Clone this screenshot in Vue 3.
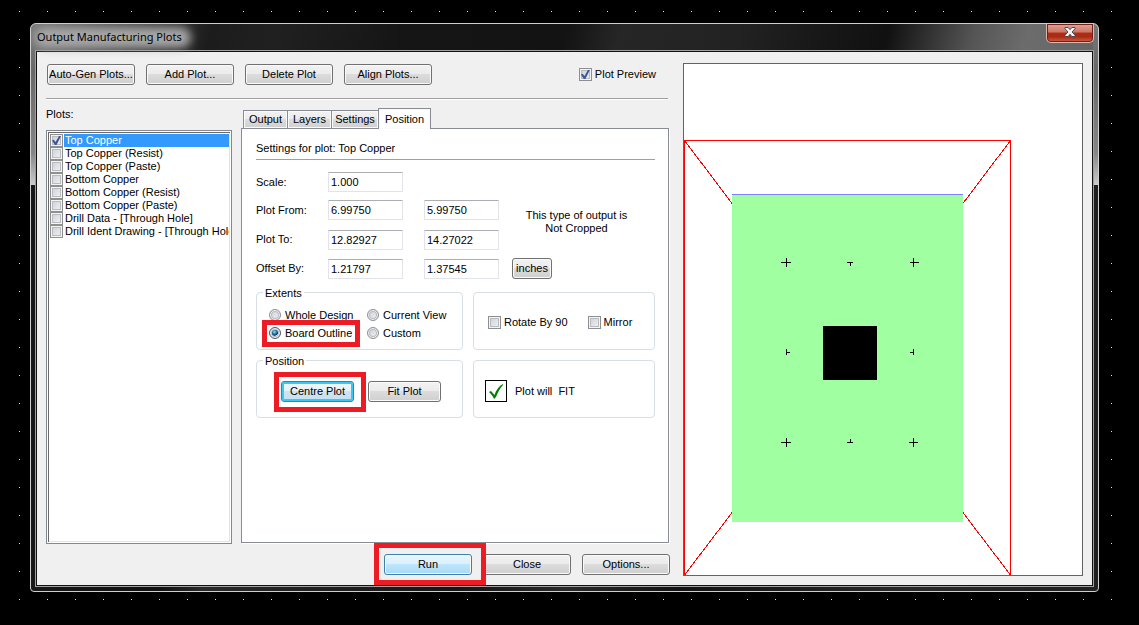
<script setup>
import { ref } from 'vue'

const plots = ref([
  { name: 'Top Copper', on: true },
  { name: 'Top Copper (Resist)', on: false },
  { name: 'Top Copper (Paste)', on: false },
  { name: 'Bottom Copper', on: false },
  { name: 'Bottom Copper (Resist)', on: false },
  { name: 'Bottom Copper (Paste)', on: false },
  { name: 'Drill Data - [Through Hole]', on: false },
  { name: 'Drill Ident Drawing - [Through Hole]', on: false }
])
const selected = ref(0)
const tabs = ['Output', 'Layers', 'Settings', 'Position']
const activeTab = ref('Position')
const preview = ref(true)
const scale = ref('1.000')
const rows = ref([
  { id: 'from', label: 'Plot From:', x: '6.99750', y: '5.99750' },
  { id: 'to', label: 'Plot To:', x: '12.82927', y: '14.27022' },
  { id: 'offset', label: 'Offset By:', x: '1.21797', y: '1.37545' }
])
const extents = ['Whole Design', 'Current View', 'Board Outline', 'Custom']
const extent = ref('Board Outline')
const rotate = ref(false)
const mirror = ref(false)
</script>

<template>
  <main class="desktop">
    <section class="window" aria-label="Output Manufacturing Plots">
      <header class="titlebar">
        <h1>Output Manufacturing Plots</h1>
        <button class="close" type="button" aria-label="Close window">
          <svg width="12" height="10" viewBox="0 0 12 10">
            <path d="M1 .5h3.2L6 2.7 7.8.5H11v1.3L8 5l3 3.2v1.3H7.800L6 7.300 4.200 9.500H1V8.200L4 5 1 1.800z" fill="#f4f4f6" stroke="#484c5c" />
          </svg>
        </button>
      </header>

      <div class="client">
        <div class="left">
          <div class="toolbar">
            <button type="button" class="btn">Auto-Gen Plots...</button>
            <button type="button" class="btn">Add Plot...</button>
            <button type="button" class="btn">Delete Plot</button>
            <button type="button" class="btn">Align Plots...</button>
            <label class="check previewcheck"><input v-model="preview" type="checkbox" />Plot Preview</label>
          </div>

          <div class="middle">
            <div class="plots">
              <h2 id="plots-title">Plots:</h2>
              <ul class="list" aria-labelledby="plots-title">
                <li v-for="(p, i) in plots" :key="p.name" @click="selected = i">
                  <label><input v-model="p.on" type="checkbox" /><span :class="{ sel: selected === i }">{{ p.name }}</span></label>
                </li>
              </ul>
            </div>

            <div class="tabbed">
              <div class="tabs" role="tablist">
                <button
                  v-for="t in tabs" :key="t" type="button" role="tab" class="tab"
                  :class="{ active: t === activeTab }" :aria-selected="t === activeTab" @click="activeTab = t"
                >{{ t }}</button>
              </div>
              <div class="panel" role="tabpanel">
                <p class="heading">Settings for plot: Top Copper</p>
                <div class="form">
                  <div class="fields">
                    <div class="row">
                      <label for="scale">Scale:</label>
                      <input id="scale" v-model="scale" class="text" type="text" />
                    </div>
                    <div v-for="r in rows" :key="r.id" class="row">
                      <label :for="r.id + '-x'">{{ r.label }}</label>
                      <input :id="r.id + '-x'" v-model="r.x" class="text" type="text" />
                      <input v-model="r.y" class="text" type="text" :aria-label="r.label + ' Y'" />
                    </div>
                  </div>
                  <div class="side">
                    <p>This type of output is<br />Not Cropped</p>
                    <button type="button" class="btn units">inches</button>
                  </div>
                </div>

                <div class="groups">
                  <fieldset>
                    <legend>Extents</legend>
                    <div class="radios">
                      <label v-for="e in extents" :key="e" class="radio">
                        <input v-model="extent" type="radio" name="extent" :value="e" />{{ e }}
                        <span v-if="e === 'Board Outline'" class="mark mark-radio"></span>
                      </label>
                    </div>
                  </fieldset>
                  <fieldset class="flags">
                    <label class="check"><input v-model="rotate" type="checkbox" />Rotate By 90</label>
                    <label class="check"><input v-model="mirror" type="checkbox" />Mirror</label>
                  </fieldset>
                  <fieldset>
                    <legend>Position</legend>
                    <div class="position">
                      <span class="marked"><button type="button" class="btn focused">Centre Plot</button><span class="mark mark-centre"></span></span>
                      <button type="button" class="btn">Fit Plot</button>
                    </div>
                  </fieldset>
                  <fieldset class="fit">
                    <svg width="22" height="22" viewBox="0 0 22 22">
                      <rect x=".5" y=".5" width="21" height="21" fill="#fff" stroke="#000" />
                      <path d="M4 12l2-1 3.500 4C11 10 14 6 18 4v1c-3 3-5 7-7 12l-2 2c-1-3-3-5-5-7z" fill="#008000" />
                    </svg>
                    <span>Plot will &nbsp;FIT</span>
                  </fieldset>
                </div>
              </div>
            </div>
          </div>

          <footer class="actions">
            <span class="marked"><button type="button" class="btn run">Run</button><span class="mark mark-run"></span></span>
            <button type="button" class="btn">Close</button>
            <button type="button" class="btn">Options...</button>
          </footer>
        </div>

        <div class="preview">
          <svg viewBox="0 0 398 511" preserveAspectRatio="xMinYMin meet" shape-rendering="crispEdges" role="img" aria-label="Plot preview">
            <g fill="none" stroke="#f00">
              <path d="M.5 511V76.500H326.500V511" />
              <path d="M.5 76.500L48.500 140M326.500 76.500L278.500 140M.5 511L48.500 448M326.500 511L278.500 448" />
            </g>
            <rect x="48" y="131" width="231" height="327" fill="#a0ffa0" />
            <rect x="48" y="130" width="231" height="1" fill="#8080ff" />
            <rect x="139" y="262" width="54" height="54" />
            <path
              fill="none" stroke="#000"
              d="M97 198.500h10M102.500 194v9M226 198.500h9M229.500 194v9M163 198.500h6M166.500 198v4M102.500 285v6M102 288.500h4M229.500 285v6M226 288.500h4M97 378.500h10M102.500 374v9M225 378.500h9M229.500 374v9M163 378.500h6M166.500 375v4"
            />
          </svg>
        </div>
      </div>
    </section>
  </main>
</template>

<style>
body { background: #000; }
</style>

<style scoped>
* { box-sizing: border-box; }
.desktop {
  min-height: 100vh;
  padding: 23px 40px 33px 30px;
  display: flex;
  font: 11px/13px "Liberation Sans", Arial, sans-serif;
  color: #000;
  background:
    linear-gradient(#000, #000) 0 100% / 100% 24px no-repeat,
    conic-gradient(from 270deg at 1px 1px, #e8e8e8 90deg, #000 0) 19px 11px / 28px 28px;
}
h1, h2, p, ul { margin: 0; padding: 0; font: inherit; list-style: none; }
button, input { font: inherit; color: inherit; margin: 0; }
.window {
  flex: 1;
  display: flex;
  flex-direction: column;
  border: 1px solid #cfcfcf;
  border-radius: 6px 6px 4px 4px;
  padding: 0 5px 5px;
  overflow: hidden;
  background:
    linear-gradient(#777, #696969 30%, #858585 80%, #ccc) 0 0 / 5px 161px no-repeat,
    linear-gradient(#777, #696969 30%, #858585 80%, #ccc) 100% 0 / 5px 161px no-repeat,
    linear-gradient(105deg, #777 0, #464646 9%, #1c1c1c 17%, #202020 23%, #151515 35%, #131313 50%, #262626 55%, #222 66%, #171717 74%, #111 80%, #555 88%, #6c6c6c 93%, #656565) 0 0 / 100% 28px no-repeat,
    linear-gradient(90deg, #171717, #101010 12%, #292929 16%, #151515 40%, #292929 50%, #131313 61%, #292929 82%, #202020);
}
.titlebar { height: 27px; display: flex; justify-content: space-between; align-items: flex-start; }
h1 {
  position: relative;
  z-index: 0;
  padding: 4px 1px 5px;
  font: 11px/17px "Noto Sans", "Open Sans", sans-serif;
}
h1::before {
  content: "";
  position: absolute;
  z-index: -1;
  inset: 3px -8px 2px -2px;
  border-radius: 10px;
  background: #a8a8a8;
  filter: blur(5px);
}
.close {
  width: 48px;
  height: 19px;
  margin-right: -1px;
  padding: 0 0 2px;
  display: flex;
  align-items: center;
  justify-content: center;
  border: 1px solid #d8b8b0;
  border-top: 0;
  border-radius: 0 0 5px 5px;
  box-shadow: inset 0 0 0 1px #702018;
  background: linear-gradient(#e0a598, #cf7565 45%, #b02c14 50%, #a82b13 70%, #d06048);
}
.client {
  flex: 1;
  display: grid;
  grid-template-columns: minmax(0, 622fr) minmax(0, 400fr);
  gap: 15px;
  padding: 11px 9px 9px;
  background: #f0f0f0;
  border: 1px solid #111;
  outline: 1px solid #a0a0a0;
}
.left { display: flex; flex-direction: column; min-width: 0; }
.toolbar {
  display: flex;
  gap: 11px;
  align-items: flex-start;
  height: 36px;
  padding: 1px 12px 0 1px;
  border-bottom: 1px solid #a0a0a0;
  box-shadow: 0 1px #fff;
}
.btn {
  width: 88px;
  height: 21px;
  padding: 0;
  white-space: nowrap;
  border: 1px solid #707070;
  border-radius: 3px;
  box-shadow: inset 0 0 0 1px #fafafa;
  background: linear-gradient(#f2f2f2, #ebebeb 49%, #dcdcdc 50%, #cfcfcf);
}
.run { border-color: #3c7fb1; background: linear-gradient(#eaf6fd, #d9f0fc 49%, #bee6fd 50%, #a7d9f5); }
.focused { border-color: #3c7fb1; box-shadow: inset 0 0 0 2px #38c8f4; background: linear-gradient(#f2f8fb, #e4f1f8 49%, #cde5f2 50%, #c4e0f0); }
.check, .radio { display: flex; align-items: center; gap: 3px; white-space: nowrap; }
.previewcheck { margin-left: auto; height: 21px; }
input[type="checkbox"], input[type="radio"] {
  appearance: none;
  flex: none;
  width: 13px;
  height: 13px;
  border: 1px solid #8e8f8f;
  box-shadow: inset 0 0 0 1px #f4f4f4, inset 0 0 0 2px #b8bcc2;
  background: linear-gradient(135deg, #c8ccd2, #f6f6f6);
}
input[type="checkbox"]:checked::before {
  content: "";
  display: block;
  width: 9px;
  height: 9px;
  margin: 1px;
  background: #40569a;
  clip-path: polygon(0 50%, 20% 42%, 40% 66%, 78% 0, 100% 0, 50% 100%, 32% 100%);
}
input[type="radio"] { width: 12px; height: 12px; border-radius: 50%; }
input[type="radio"]:checked {
  border-color: #4c5a66;
  background: radial-gradient(circle at 45% 40%, #9fe4ff 0, #1c78ae 25%, #0b3a60 42%, #dfe6ea 50%);
}
.middle { flex: 1; display: flex; gap: 9px; padding-top: 9px; }
.plots { flex: 0 0 186px; min-width: 0; display: flex; flex-direction: column; margin-bottom: -1px; }
.plots h2 { height: 22px; }
.list {
  flex: 1;
  padding: 2px;
  overflow: hidden;
  background: #fff;
  border: 1px solid #828790;
  box-shadow: inset 0 0 0 1px #fff, inset 2px 2px #696969, inset -2px -2px #e3e3e3;
}
.list li label { display: flex; padding-left: 1px; height: 13px; white-space: nowrap; }
.list li:first-child { margin-top: 1px; }
.list span { flex: 1; min-width: 0; overflow: hidden; margin-left: 1px; padding-left: 1px; }
.list .sel { background: #3399ff; color: #fff; }
.tabbed { flex: 1; display: flex; flex-direction: column; margin-right: -1px; }
.tabs { display: flex; align-items: flex-end; height: 21px; padding-left: 2px; margin-bottom: -1px; }
.tab {
  height: 19px;
  width: 44px;
  padding: 0;
  border: 1px solid #898c95;
  border-right-width: 0;
  box-shadow: inset 0 0 0 1px #fafafa;
  background: linear-gradient(#f2f2f2, #ebebeb 49%, #dcdcdc 50%, #cfcfcf);
}
.tab:nth-child(3) { width: 47px; }
.tab.active { position: relative; width: 53px; height: 21px; border-width: 1px 1px 0; background: #fff; }
.panel {
  flex: 1;
  padding: 13px 13px 0 14px;
  background: #fff;
  border: 1px solid #898c95;
  box-shadow: 1px 1px #fff;
}
.heading { height: 18px; border-bottom: 1px solid #a0a0a0; }
.form { display: flex; padding-top: 12px; }
.fields { display: grid; gap: 9px; }
.row { display: flex; align-items: center; height: 20px; }
.row label { width: 72px; }
.row:first-child { margin-bottom: -1px; }
.text {
  width: 75px;
  height: 20px;
  padding: 0 2px;
  border: 1px solid #e2e3ea;
  border-top-color: #abadb3;
  border-radius: 1px;
  background: #fff;
}
.text + .text { margin-left: 21px; }
.side { flex: 1; padding: 37px 0 0 13px; }
.side p { height: 49px; padding-right: 14px; text-align: center; }
.units { width: 40px; }
.groups {
  display: grid;
  grid-template-columns: minmax(0, 207fr) minmax(0, 182fr);
  gap: 10px;
  padding-top: 13px;
}
fieldset {
  position: relative;
  height: 58px;
  margin: 0;
  padding: 0;
  min-width: 0;
  border: 1px solid #d5dfe5;
  border-radius: 4px;
}
legend { position: absolute; top: -6px; left: 6px; padding: 0 2px; background: #fff; }
.radios { display: grid; grid-template-columns: 98px 1fr; grid-auto-rows: 18px; padding: 13px 0 0 12px; }
.radio { position: relative; gap: 4px; }
.mark { position: absolute; border: 5px solid #ed1c24; pointer-events: none; }
.mark-radio { width: 98px; height: 27px; left: -7px; top: -4px; }
.marked { position: relative; display: flex; }
.mark-centre { inset: -9px -12px -10px -7px; }
.mark-run { inset: -11px -14px -10px -10px; }
.position { display: flex; gap: 14px; padding: 20px 0 0 24px; }
.position .btn { width: 73px; }
.flags { display: flex; gap: 20px; padding: 2px 0 0 14px; }
.fit { display: flex; align-items: center; gap: 8px; padding: 4px 0 0 11px; }
.actions { display: flex; justify-content: flex-end; gap: 11px; margin-right: -2px; padding: 11px 0 1px; }
.preview { background: #fff; border: 1px solid #646464; min-width: 0; }
.preview svg { display: block; width: 100%; height: 100%; }
</style>
